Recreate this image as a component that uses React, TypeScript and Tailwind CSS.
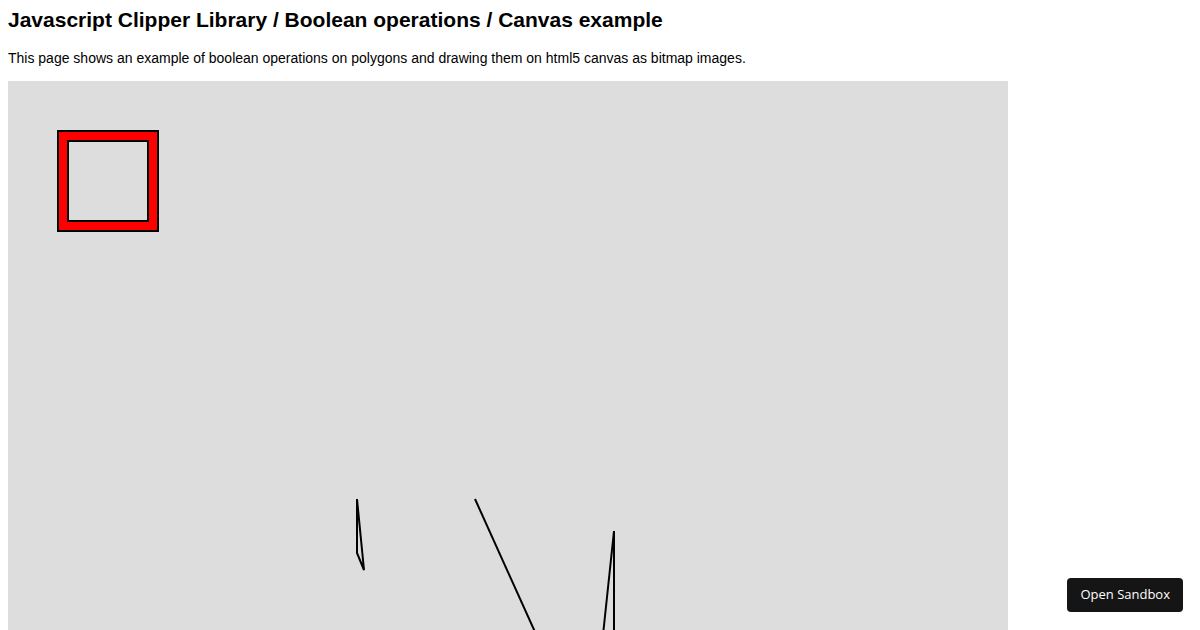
export default function App() {
  return (
    <div className="min-h-screen bg-white p-2 font-['Liberation_Sans',Arial,sans-serif] text-black">
      <h2 className="mt-0 text-[21px] font-bold leading-[24px]">
        Javascript Clipper Library / Boolean operations / Canvas example
      </h2>
      <p className="mt-[18px] text-[14px] leading-[16px]">
        This page shows an example of boolean operations on polygons and drawing them on html5 canvas as bitmap images.
      </p>
      <div className="mt-[15px] h-[700px] w-[1000px] bg-[#dddddd]">
        <svg width="1000" height="700" viewBox="0 0 1000 700">
          <rect x="50" y="50" width="100" height="100" fill="#ff0000" stroke="#000" strokeWidth="2" />
          <rect x="60" y="60" width="80" height="80" fill="#dddddd" stroke="#000" strokeWidth="2" />
          <polygon points="349,418 356,489 349,472" fill="none" stroke="#000" strokeWidth="2" />
          <line x1="467" y1="418" x2="555" y2="613" stroke="#000" strokeWidth="2" />
          <line x1="606" y1="450" x2="606" y2="620" stroke="#000" strokeWidth="2" />
          <line x1="606" y1="450" x2="588" y2="620" stroke="#000" strokeWidth="2" />
        </svg>
      </div>
      <button className="fixed bottom-[18px] right-[17px] h-[34px] rounded-[4px] bg-[#151515] px-[13px] font-['Open_Sans',sans-serif] text-[13px] font-medium text-white">
        Open Sandbox
      </button>
    </div>
  );
}
